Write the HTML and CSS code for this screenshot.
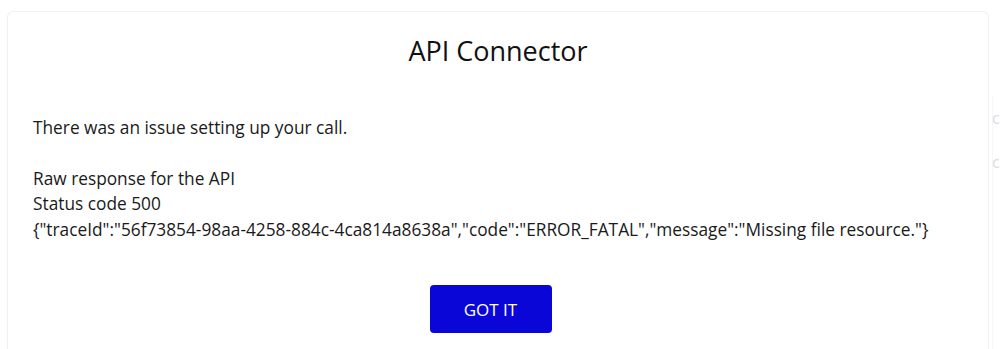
FILE: index.html
```html
<!DOCTYPE html>
<html>
<head>
<meta charset="utf-8">
<link rel="stylesheet" href="styles.css">
</head>
<body>
<div class="backdrop" aria-hidden="true">
  <div class="bg-line">c</div>
  <div class="bg-line">ce</div>
</div>
<div class="modal">
  <h1 class="title">API Connector</h1>
  <div class="content">
    <p class="msg">There was an issue setting up your call.</p>
    <p class="raw">Raw response for the API<br>Status code 500<br>{"traceId":"56f73854-98aa-4258-884c-4ca814a8638a","code":"ERROR_FATAL","message":"Missing file resource."}</p>
  </div>
  <div class="actions">
    <button class="btn">GOT IT</button>
  </div>
</div>
</body>
</html>
```
FILE: styles.css
```css
html, body {
  margin: 0;
  padding: 0;
  background: #ffffff;
  height: 349px;
  overflow: hidden;
}
body {
  font-family: "Open Sans", "Liberation Sans", sans-serif;
  color: #1a1a1a;
  position: relative;
}
.backdrop {
  position: absolute;
  left: 992px;
  top: 96px;
  width: 8px;
  overflow: hidden;
  color: #dcdcdc;
  font-size: 16px;
  line-height: 44px;
  border-left: 1px solid #f6f6f6;
  height: 253px;
  white-space: nowrap;
}
.bg-line {
  margin-left: -1px;
}
.modal {
  position: relative;
  margin: 11px 0 0 7px;
  width: 982px;
  height: 338px;
  background: #fff;
  border: 1px solid #f0f0f0;
  border-bottom: none;
  border-radius: 6px 6px 0 0;
  box-sizing: border-box;
}
.title {
  margin: 0;
  padding-top: 21px;
  text-align: center;
  font-weight: 400;
  font-size: 27px;
  line-height: 36px;
  color: #111;
}
.content {
  padding: 0 25px;
  margin-top: 46px;
}
.content p {
  margin: 0;
  font-size: 17.3px;
  line-height: 25.5px;
}
.msg {
  margin-bottom: 25px !important;
}
.actions {
  display: flex;
  justify-content: center;
  margin-top: 43px;
}
.btn {
  width: 122px;
  height: 48px;
  background: #0a06d8;
  color: #fff;
  border: none;
  border-radius: 4px;
  font-family: "Open Sans", "Liberation Sans", sans-serif;
  font-size: 17px;
  padding: 0;
  margin-left: -15px;
}
```
